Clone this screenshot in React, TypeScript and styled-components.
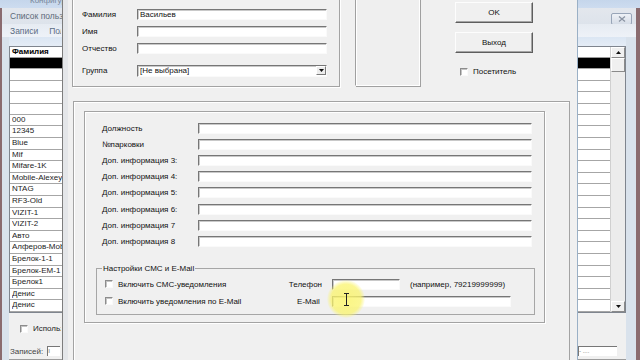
import React from 'react';
import styled, { createGlobalStyle } from 'styled-components';

const GlobalStyle = createGlobalStyle`
  html, body {
    margin: 0;
    padding: 0;
  }
  body {
    width: 640px;
    height: 360px;
    overflow: hidden;
    font-family: "Liberation Sans", Arial, sans-serif;
    font-size: 8px;
    color: #111;
  }
`;

const Desktop = styled.div`
  position: relative;
  width: 640px;
  height: 360px;
  overflow: hidden;
  background: #8a6b6f;
`;

/* windows behind the dialog */

const ConfigWindow = styled.div`
  position: absolute;
  left: 0;
  top: -12px;
  width: 640px;
  height: 20px;
  box-sizing: border-box;
  padding: 8px 0 0 30px;
  line-height: 10px;
  background: linear-gradient(#b9cde6, #cddcef);
  color: #7a889a;
`;

const ListWindow = styled.div`
  position: absolute;
  left: 2px;
  top: 8px;
  width: 634px;
  height: 360px;
  display: flex;
  flex-direction: column;
  background: #d9e2ec;
`;

const TitleBar = styled.div`
  height: 16px;
  display: flex;
  align-items: center;
  justify-content: space-between;
  padding: 0 4px 0 8px;
  background: linear-gradient(#e3e7ed, #dde3eb);
`;

/* text of the back window is cut where the dialog lies over it */
const Clip = styled.span<{ $w: number }>`
  display: block;
  width: ${p => p.$w}px;
  overflow: hidden;
  white-space: nowrap;
`;

const TitleText = styled(Clip)`
  color: #5d6a79;
  font-size: 8.5px;
`;

const CloseBtn = styled.div`
  width: 19px;
  height: 10px;
  margin-top: 6px;
  border: 1px solid #98a5b8;
  border-radius: 2px;
  background: linear-gradient(#eef1f6, #d6dde7);
  display: flex;
  align-items: center;
  justify-content: center;
`;

const MenuBar = styled.div`
  height: 13px;
  display: flex;
  align-items: center;
  gap: 11px;
  padding: 0 0 0 8px;
  background: linear-gradient(#e6ebf2, #eef2f8);
  color: #5c6d84;
  font-size: 8.5px;
`;

const Client = styled.div`
  flex: 1;
  display: flex;
  flex-direction: column;
  margin: 0 10px 0 7px;
  padding-top: 9px;
  background: linear-gradient(#dbe6f3 0, #e6edf6 10px, #f0f0f0 10px);
`;

const ListBox = styled.div`
  height: 267px;
  box-sizing: border-box;
  border: 1px solid #7f858e;
  display: flex;
  background: #fff;
`;

const Grid = styled.div`
  flex: 1;
  display: flex;
  flex-direction: column;
`;

const HeaderRow = styled.div`
  height: 11px;
  box-sizing: border-box;
  border-bottom: 1px solid #9a9a9a;
  padding-left: 2px;
  font-weight: bold;
  line-height: 10px;
  color: #000;
`;

const Row = styled.div<{ $selected?: boolean }>`
  height: 11.6px;
  box-sizing: border-box;
  border-bottom: 1px solid #a6a6a6;
  padding-left: 2px;
  line-height: 10.6px;
  background: ${p => (p.$selected ? '#000' : '#fff')};
  color: #1c1c1c;
`;

const ScrollBar = styled.div`
  width: 14px;
  display: flex;
  flex-direction: column;
  background: #ececec;
  border-left: 1px solid #d0d0d0;
`;

const ScrollBtn = styled.div<{ $h: number }>`
  height: ${p => p.$h}px;
  box-sizing: border-box;
  border: 1px solid;
  border-color: #fff #8a8a8a #8a8a8a #fff;
  background: #f0f0f0;
  display: flex;
  align-items: center;
  justify-content: center;
`;

const ScrollTrack = styled.div`
  flex: 1;
`;

const ListFooter = styled.div`
  display: flex;
  align-items: center;
  gap: 5px;
  height: 9px;
  margin: 11px 0 0 11px;
  color: #1c1c1c;
`;

const StatusRow = styled.div`
  display: flex;
  align-items: center;
  justify-content: space-between;
  margin-top: 13px;
  height: 10px;
  padding: 0 9px 0 1px;
  color: #444;
`;

const StatusLeft = styled.span`
  display: flex;
  align-items: center;
`;

const SmallBox = styled.div<{ $w: number }>`
  width: ${p => p.$w}px;
  height: 9px;
  margin-left: 4px;
  border-top: 1px solid #777;
  border-left: 1px solid #777;
  background: #fff;
  font-size: 6px;
  line-height: 8px;
  color: #666;
`;

const StatusLine = styled.div`
  margin-top: 3px;
  border-top: 1px solid #9c9c9c;
  flex: 1;
  background: #f4f4f4;
`;

/* the dialog */

const Dialog = styled.div`
  position: absolute;
  left: 62px;
  top: -30px;
  width: 516px;
  height: 400px;
  box-sizing: border-box;
  background: #f0f0f0;
  border-left: 1px solid #7d7d7d;
  border-right: 1px solid #9ab0c6;
  box-shadow: inset 5px 0 0 #e4e6e9;
  padding: 10px 0 0 9px;
  display: flex;
  flex-direction: column;
`;

const TopRow = styled.div`
  height: 107px;
  display: flex;
  align-items: flex-start;
`;

const GroupBox = styled.div`
  width: 268px;
  height: 107px;
  box-sizing: border-box;
  border: 1px solid #a3a3a3;
  box-shadow: inset 1px 1px 0 #fff, 1px 1px 0 #fff;
  padding: 25px 0 0 9px;
`;

const NameGrid = styled.div`
  display: grid;
  grid-template-columns: 55px 190px;
  grid-auto-rows: 17px;
  align-items: center;
`;

const Label = styled.span<{ $w?: number; $right?: boolean; $shift?: number }>`
  color: #111;
  white-space: nowrap;
  flex-shrink: 0;
  width: ${p => (p.$w ? `${p.$w}px` : 'auto')};
  text-align: ${p => (p.$right ? 'right' : 'left')};
  margin-top: ${p => p.$shift ?? 0}px;
`;

const Edit = styled.div<{ $w?: number; $h?: number; $shift?: number }>`
  width: ${p => (p.$w ? `${p.$w}px` : 'auto')};
  height: ${p => p.$h ?? 11}px;
  flex-shrink: 0;
  box-sizing: border-box;
  border: 1px solid;
  border-color: #767676 #fafafa #fafafa #767676;
  box-shadow: inset 1px 1px 0 #c9c9c9;
  background: #fff;
  margin-top: ${p => p.$shift ?? 0}px;
  padding-left: 2px;
  line-height: 9px;
  color: #111;
  display: flex;
  align-items: center;
  justify-content: space-between;
`;

const DropBtn = styled.div`
  width: 10px;
  height: 9px;
  box-sizing: border-box;
  border: 1px solid;
  border-color: #fff #7a7a7a #7a7a7a #fff;
  background: #ececec;
  display: flex;
  align-items: center;
  justify-content: center;
`;

const Photo = styled.div`
  width: 65px;
  height: 106px;
  margin-left: 15px;
  box-sizing: border-box;
  border: 1px solid;
  border-color: #a0a0a0 #fff #fff #a0a0a0;
  box-shadow: 1px 1px 0 #a0a0a0, inset 1px 1px 0 #fff;
  background: #efefef;
`;

const ButtonCol = styled.div`
  width: 78px;
  margin-left: 35px;
  padding-top: 22px;
  display: flex;
  flex-direction: column;
  gap: 9px;
`;

const Button = styled.div`
  height: 21px;
  box-sizing: border-box;
  border: 1px solid;
  border-color: #fdfdfd #5e5e5e #5e5e5e #fdfdfd;
  box-shadow: inset -1px -1px 0 #a5a5a5;
  background: #f0f0f0;
  display: flex;
  align-items: center;
  justify-content: center;
  color: #111;
`;

const CheckRow = styled.label<{ $w?: number; $indent?: number; $top?: number }>`
  display: flex;
  align-items: center;
  gap: 5px;
  height: 9px;
  flex-shrink: 0;
  width: ${p => (p.$w ? `${p.$w}px` : 'auto')};
  padding-left: ${p => p.$indent ?? 0}px;
  margin-top: ${p => p.$top ?? 0}px;
  color: #111;
  white-space: nowrap;
`;

const CheckBox = styled.span`
  width: 8px;
  height: 8px;
  box-sizing: border-box;
  border: 1px solid;
  border-color: #8c8c8c #fafafa #fafafa #8c8c8c;
  box-shadow: inset 1px 1px 0 #c4c4c4;
  background: #fff;
  flex-shrink: 0;
`;

const OuterFrame = styled.div`
  flex: 1;
  width: 497px;
  margin: 14px 0 0 1px;
  box-sizing: border-box;
  border: 1px solid #a3a3a3;
  border-bottom: none;
  box-shadow: inset 1px 1px 0 #fff;
  padding: 9px 0 0 10px;
`;

const InnerPanel = styled.div`
  width: 461px;
  height: 212px;
  box-sizing: border-box;
  border: 1px solid #a3a3a3;
  box-shadow: inset 1px 1px 0 #fff, 1px 1px 0 #fff;
  padding: 8.5px 0 0 11px;
  display: flex;
  flex-direction: column;
`;

const InfoGrid = styled.div`
  display: grid;
  grid-template-columns: 96px 334px;
  grid-auto-rows: 16.1px;
  align-items: center;
  margin-left: 6px;
`;

const SmsGroup = styled.fieldset`
  width: 439px;
  height: 51px;
  box-sizing: border-box;
  margin: 14.7px 0 0 0;
  padding: 2px 0 0 8px;
  border: 1px solid #a6a6a6;
  min-width: 0;
`;

const SmsLegend = styled.legend`
  margin-left: -3px;
  padding: 0 1px;
  line-height: 10px;
  color: #111;
`;

const SmsRow = styled.div`
  display: flex;
  height: 17px;
  align-items: center;
  gap: 10px;
`;

const Hint = styled.span`
  color: #111;
  white-space: nowrap;
`;

const CursorSpot = styled.div`
  position: absolute;
  left: 327px;
  top: 280px;
  width: 38px;
  height: 38px;
  border-radius: 50%;
  background: radial-gradient(circle, rgba(250, 244, 110, 0.85) 0, rgba(250, 244, 110, 0.75) 55%, rgba(250, 244, 110, 0) 72%);
  display: flex;
  align-items: center;
  justify-content: center;
`;

const names = [
  '', '', '', '',
  '000', '12345', 'Blue', 'Mif', 'Mifare-1K', 'Mobile-Alexey', 'NTAG', 'RF3-Old',
  'VIZIT-1', 'VIZIT-2', 'Авто', 'Алферов-Mobile', 'Брелок-1-1', 'Брелок-EM-1',
  'Брелок1', 'Денис', 'Денис',
];

const extraFields = [
  'Должность',
  '№парковки',
  'Доп. информация 3:',
  'Доп. информация 4:',
  'Доп. информация 5:',
  'Доп. информация 6:',
  'Доп. информация 7',
  'Доп. информация 8',
];

function Arrow({ up }: { up?: boolean }) {
  return (
    <svg width="5" height="3" viewBox="0 0 5 3">
      <path d={up ? 'M0 3 L2.5 0 L5 3 Z' : 'M0 0 L5 0 L2.5 3 Z'} fill="#111" />
    </svg>
  );
}

function UserList() {
  return (
    <ListWindow>
      <TitleBar>
        <TitleText $w={52}>Список пользователей</TitleText>
        <CloseBtn>
          <svg width="8" height="6" viewBox="0 0 8 6">
            <path d="M1 0.5 L7 5.5 M7 0.5 L1 5.5" stroke="#8a94a3" strokeWidth="1.3" />
          </svg>
        </CloseBtn>
      </TitleBar>
      <MenuBar>
        <span>Записи</span>
        <Clip $w={12}>Пользователи</Clip>
      </MenuBar>
      <Client>
        <ListBox>
          <Grid>
            <HeaderRow>Фамилия</HeaderRow>
            <Row $selected />
            {names.map((n, i) => (
              <Row key={i}>
                <Clip $w={51}>{n}</Clip>
              </Row>
            ))}
          </Grid>
          <ScrollBar>
            <ScrollBtn $h={11}><Arrow up /></ScrollBtn>
            <ScrollBtn $h={14} />
            <ScrollTrack />
            <ScrollBtn $h={11}><Arrow /></ScrollBtn>
          </ScrollBar>
        </ListBox>
        <ListFooter>
          <CheckBox />
          <Clip $w={28}>Использовать фильтр</Clip>
        </ListFooter>
        <StatusRow>
          <StatusLeft>
            Записей:
            <SmallBox $w={12}>I</SmallBox>
          </StatusLeft>
          <SmallBox $w={38}>- ....</SmallBox>
        </StatusRow>
        <StatusLine />
      </Client>
    </ListWindow>
  );
}

function UserDialog() {
  return (
    <Dialog>
      <TopRow>
        <GroupBox>
          <NameGrid>
            <Label>Фамилия</Label>
            <Edit>Васильев</Edit>
            <Label>Имя</Label>
            <Edit />
            <Label>Отчество</Label>
            <Edit />
            <Label $shift={10}>Группа</Label>
            <Edit $shift={10} $h={12}>
              [Не выбрана]
              <DropBtn><Arrow /></DropBtn>
            </Edit>
          </NameGrid>
        </GroupBox>
        <Photo />
        <ButtonCol>
          <Button>OK</Button>
          <Button>Выход</Button>
          <CheckRow $indent={5} $top={5}>
            <CheckBox />
            Посетитель
          </CheckRow>
        </ButtonCol>
      </TopRow>

      <OuterFrame>
        <InnerPanel>
          <InfoGrid>
            {extraFields.map(f => (
              <React.Fragment key={f}>
                <Label>{f}</Label>
                <Edit />
              </React.Fragment>
            ))}
          </InfoGrid>
          <SmsGroup>
            <SmsLegend>Настройки СМС и E-Mail</SmsLegend>
            <SmsRow>
              <CheckRow $w={172}>
                <CheckBox />
                Включить СМС-уведомления
              </CheckRow>
              <Label $w={35} $right>Телефон</Label>
              <Edit $w={68} />
              <Hint>(например, 79219999999)</Hint>
            </SmsRow>
            <SmsRow>
              <CheckRow $w={172}>
                <CheckBox />
                Включить уведомления по E-Mail
              </CheckRow>
              <Label $w={35} $right>E-Mail&nbsp;</Label>
              <Edit $w={179} />
            </SmsRow>
          </SmsGroup>
        </InnerPanel>
      </OuterFrame>
    </Dialog>
  );
}

export default function App() {
  return (
    <>
      <GlobalStyle />
      <Desktop>
        <ConfigWindow>Конфигурация</ConfigWindow>
        <UserList />
        <UserDialog />
        <CursorSpot>
          <svg width="7" height="13" viewBox="0 0 7 13">
            <path d="M1 0.5 H6 M3.5 0.5 V12.5 M1 12.5 H6" stroke="#222" strokeWidth="1" fill="none" />
          </svg>
        </CursorSpot>
      </Desktop>
    </>
  );
}
